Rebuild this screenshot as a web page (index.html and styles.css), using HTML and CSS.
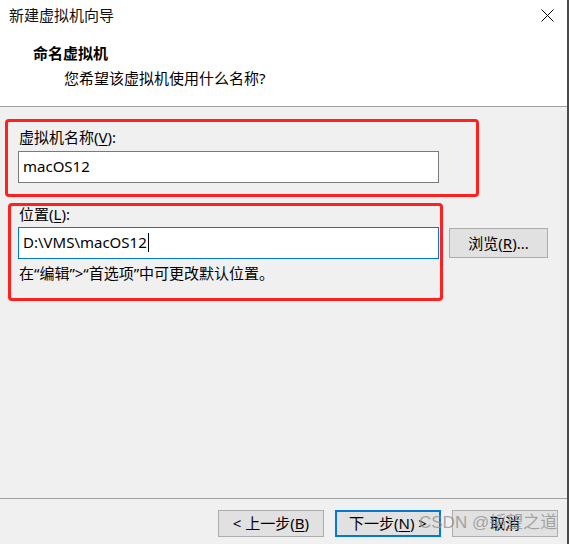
FILE: index.html
```html
<!DOCTYPE html>
<html lang="zh-CN">
<head>
<meta charset="utf-8">
<title>新建虚拟机向导</title>
<link rel="stylesheet" href="styles.css">
</head>
<body>
<div class="window">
  <div class="header">
    <div class="titlebar">
      <span class="title">新建虚拟机向导</span>
      <svg class="close" width="13" height="13" viewBox="0 0 13 13"><path d="M0.5 0.5 L12.5 12.5 M12.5 0.5 L0.5 12.5" stroke="#000" stroke-width="1" fill="none"/></svg>
    </div>
    <div class="heading">命名虚拟机</div>
    <div class="subtitle">您希望该虚拟机使用什么名称?</div>
  </div>
  <div class="content">
    <div class="label">虚拟机名称(<u>V</u>):</div>
    <div class="input">macOS12</div>
    <div class="label label2">位置(<u>L</u>):</div>
    <div class="row">
      <div class="input focus">D:\VMS\macOS12<span class="caret"></span></div>
      <div class="btn browse">浏览(<u>R</u>)...</div>
    </div>
    <div class="help">在“编辑”&gt;“首选项”中可更改默认位置。</div>
    <div class="mark mark1"></div>
    <div class="mark mark2"></div>
  </div>
  <div class="footer">
    <div class="btn nav">&lt; 上一步(<u>B</u>)</div>
    <div class="btn nav primary">下一步(<u>N</u>) &gt;</div>
    <div class="btn nav">取消</div>
    <div class="watermark">CSDN @韬望之道</div>
  </div>
</div>
</body>
</html>
```

FILE: styles.css
```css
html, body {
  margin: 0;
  padding: 0;
  background: #ffffff;
}
body {
  font-family: "Noto Sans", "Noto Sans CJK SC", sans-serif;
  font-size: 15px;
  color: #000;
}
.window {
  position: relative;
  width: 567px;
  height: 544px;
  border-right: 2px solid #4a4a4a;
  display: flex;
  flex-direction: column;
  background: #f0f0f0;
}
.header {
  background: #ffffff;
  border-bottom: 1px solid #a0a0a0;
  box-sizing: border-box;
  height: 107px;
  padding-top: 5px;
}
.titlebar {
  display: flex;
  align-items: center;
  justify-content: space-between;
  height: 20px;
  padding-left: 9px;
  padding-right: 13px;
}
.title {
  line-height: 20px;
  color: #111;
}
.close {
  display: block;
  margin-top: 1px;
}
.heading {
  margin-top: 18px;
  padding-left: 33px;
  line-height: 20px;
  font-weight: bold;
  font-family: "Noto Sans CJK SC", sans-serif;
}
.subtitle {
  margin-top: 5px;
  padding-left: 64px;
  line-height: 20px;
}
.content {
  position: relative;
  flex: 1;
  padding-left: 18px;
}
.label {
  margin-top: 20px;
  padding-left: 1px;
  line-height: 20px;
}
.label u, .btn u {
  text-decoration-thickness: 1px;
  text-underline-offset: 2px;
}
.label2 {
  margin-top: 21px;
}
.input {
  box-sizing: border-box;
  width: 421px;
  height: 32px;
  margin-top: 4px;
  background: #fff;
  border: 1px solid #7a7a7a;
  padding-left: 4px;
  padding-bottom: 3px;
  line-height: 20px;
  display: flex;
  align-items: center;
}
.input.focus {
  border-color: #0078d7;
  margin-top: 0;
}
.caret {
  display: inline-block;
  width: 1px;
  height: 19px;
  background: #000;
  margin-left: 1px;
  margin-top: 2px;
}
.row {
  display: flex;
  align-items: flex-start;
  margin-top: 3px;
}
.btn {
  box-sizing: border-box;
  background: #e1e1e1;
  border: 1px solid #adadad;
  display: flex;
  align-items: center;
  justify-content: center;
  line-height: 20px;
  padding-bottom: 1px;
}
.browse {
  width: 99px;
  height: 30px;
  margin-left: 10px;
  margin-top: 1px;
}
.help {
  margin-top: 4px;
  padding-left: 1px;
  line-height: 20px;
}
.mark {
  position: absolute;
  box-sizing: border-box;
  border: 3px solid #ff2020;
  border-radius: 4px;
}
.mark1 {
  left: 5px;
  top: 12px;
  width: 474px;
  height: 78px;
}
.mark2 {
  left: 8px;
  top: 96px;
  width: 435px;
  height: 98px;
}
.footer {
  position: relative;
  height: 46px;
  box-sizing: border-box;
  border-top: 1px solid #a0a0a0;
  display: flex;
  justify-content: flex-end;
  align-items: flex-start;
  gap: 11px;
  padding-top: 11px;
  padding-right: 9px;
}
.nav {
  width: 106px;
  height: 27px;
}
.nav.primary {
  border: 2px solid #0078d7;
}
.watermark {
  position: absolute;
  left: 419px;
  top: 12px;
  font-size: 17px;
  line-height: 24px;
  color: rgba(140, 140, 140, 0.75);
  font-family: "Liberation Sans", "Noto Sans CJK SC", sans-serif;
  white-space: nowrap;
  pointer-events: none;
}
```
